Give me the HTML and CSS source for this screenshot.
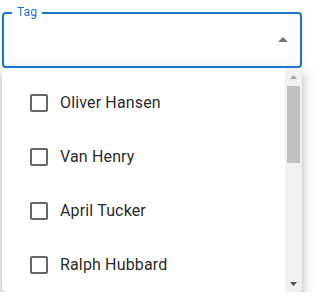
FILE: index.html
```html
<!DOCTYPE html>
<html lang="en">
<head>
    <meta charset="UTF-8">
    <meta name="viewport" content="width=device-width, initial-scale=1.0">
    <title>Tag select</title>
    <link rel="stylesheet" href="styles.css">
</head>
<body>

<!-- Select field -->
<div class="select">
    <fieldset class="outline">
        <legend><span>Tag</span></legend>
    </fieldset>
    <svg class="arrow" viewBox="0 0 24 24"><path d="M7 14l5-5 5 5z"/></svg>
</div>

<!-- Open menu -->
<div class="menu">
    <ul class="list">
        <li class="item"><span class="check"><svg viewBox="0 0 24 24"><path d="M19 5v14H5V5h14m0-2H5c-1.1 0-2 .9-2 2v14c0 1.1.9 2 2 2h14c1.1 0 2-.9 2-2V5c0-1.1-.9-2-2-2z"/></svg></span><span class="label">Oliver Hansen</span></li>
        <li class="item"><span class="check"><svg viewBox="0 0 24 24"><path d="M19 5v14H5V5h14m0-2H5c-1.1 0-2 .9-2 2v14c0 1.1.9 2 2 2h14c1.1 0 2-.9 2-2V5c0-1.1-.9-2-2-2z"/></svg></span><span class="label">Van Henry</span></li>
        <li class="item"><span class="check"><svg viewBox="0 0 24 24"><path d="M19 5v14H5V5h14m0-2H5c-1.1 0-2 .9-2 2v14c0 1.1.9 2 2 2h14c1.1 0 2-.9 2-2V5c0-1.1-.9-2-2-2z"/></svg></span><span class="label">April Tucker</span></li>
        <li class="item"><span class="check"><svg viewBox="0 0 24 24"><path d="M19 5v14H5V5h14m0-2H5c-1.1 0-2 .9-2 2v14c0 1.1.9 2 2 2h14c1.1 0 2-.9 2-2V5c0-1.1-.9-2-2-2z"/></svg></span><span class="label">Ralph Hubbard</span></li>
    </ul>
    <!-- Scrollbar -->
    <div class="scrollbar">
        <div class="sb-btn up"><svg viewBox="0 0 7 4"><path d="M0 4L3.5 0 7 4z"/></svg></div>
        <div class="sb-thumb"></div>
        <div class="sb-btn down"><svg viewBox="0 0 7 4"><path d="M0 0h7L3.5 4z"/></svg></div>
    </div>
</div>

</body>
</html>
```

FILE: styles.css
```css
body {
    font-family: Roboto, "Liberation Sans", sans-serif;
    margin: 0;
    padding: 12px 0 0 2px;
    background-color: #ffffff;
    color: rgba(0, 0, 0, 0.87);
}

.select {
    position: relative;
    width: 300px;
    height: 56px;
    box-sizing: border-box;
    display: flex;
    align-items: center;
    justify-content: flex-end;
    padding-right: 7px;
}

.outline {
    position: absolute;
    top: -5px;
    left: 0;
    right: 0;
    bottom: 0;
    margin: 0;
    padding: 0 8px;
    border: 2px solid #1976d2;
    border-radius: 4px;
    pointer-events: none;
}

.outline legend {
    padding: 0;
    height: 11px;
    font-size: 12px;
    line-height: 11px;
    color: #1976d2;
    letter-spacing: 0.01em;
}

.outline legend span {
    padding: 0 5px;
}

.arrow {
    width: 24px;
    height: 24px;
    fill: rgba(0, 0, 0, 0.54);
}

.menu {
    display: flex;
    width: 300px;
    height: 224px;
    background-color: #ffffff;
    border-radius: 4px;
    overflow: hidden;
    box-shadow: 0 5px 5px -3px rgba(0, 0, 0, 0.2), 0 8px 10px 1px rgba(0, 0, 0, 0.14), 0 3px 14px 2px rgba(0, 0, 0, 0.12);
}

.list {
    flex: 1;
    list-style: none;
    margin: 0;
    padding: 8px 0;
}

.item {
    display: flex;
    align-items: center;
    padding: 6px 16px;
    font-size: 16px;
    line-height: 1.5;
    letter-spacing: 0.00938em;
}

.check {
    display: flex;
    padding: 9px;
}

.check svg {
    width: 24px;
    height: 24px;
    fill: rgba(0, 0, 0, 0.6);
}

.label {
    margin: 4px 0;
    white-space: nowrap;
}

.scrollbar {
    width: 17px;
    display: flex;
    flex-direction: column;
    background-color: #f1f1f1;
}

.sb-btn {
    height: 17px;
    display: flex;
    align-items: center;
    justify-content: center;
}

.sb-btn svg {
    width: 7px;
    height: 4px;
}

.sb-btn.up svg {
    fill: #a3a3a3;
}

.sb-btn.down {
    margin-top: auto;
}

.sb-btn.down svg {
    fill: #505050;
}

.sb-thumb {
    height: 77px;
    margin: 1px 2px 0;
    background-color: #c1c1c1;
}
```
